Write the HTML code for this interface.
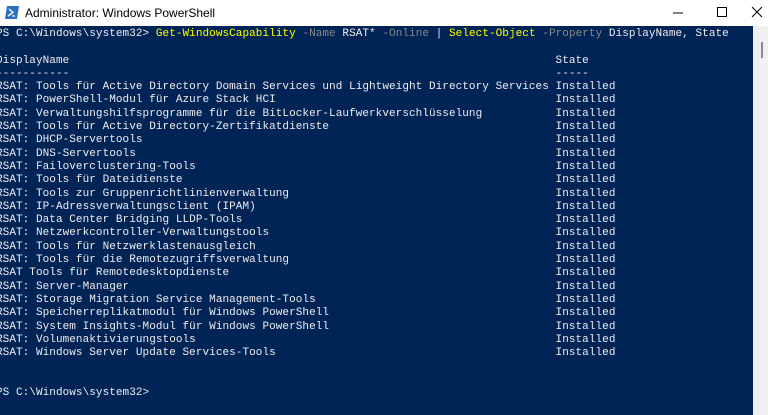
<!DOCTYPE html>
<html><head><style>
html,body{margin:0;padding:0;width:768px;height:415px;overflow:hidden;background:#fff}
.title{position:absolute;left:0;top:0;width:768px;height:26px;background:#fff;font-family:"Liberation Sans",sans-serif;font-size:12px;color:#000}
.title span{position:absolute;left:25px;top:6px}
.con{position:absolute;left:0;top:26px;width:753px;height:389px;background:#012456;overflow:hidden}
.sb{position:absolute;left:753px;top:26px;width:15px;height:389px;background:#f0f0f0}
.thumb{position:absolute;left:8px;top:16px;width:2px;height:16px;background:#8a8a8a}
pre{position:absolute;left:-4px;top:2px;margin:0;font-family:"Liberation Mono",monospace;font-size:11px;letter-spacing:0.06px;line-height:13.3px;color:#eeedf0;white-space:pre}
.y{color:#ffff00}.g{color:#8a8a8a}
</style></head><body>
<div class="title">
<svg style="position:absolute;left:5px;top:6px" width="14" height="13" viewBox="0 0 14 13"><path d="M2 0H14L12 13H0Z" fill="#2b6fc4"/><path d="M4 3L8 6.5L3 10" stroke="#fff" stroke-width="1.4" fill="none"/><path d="M7 10H10" stroke="#fff" stroke-width="1.2"/></svg>
<span>Administrator: Windows PowerShell</span>
<svg style="position:absolute;left:673px;top:6px" width="90" height="14"><path d="M0 7H10" stroke="#000"/><path d="M44.5 1.5h9v9h-9z" stroke="#000" fill="none"/><path d="M79 1L89 11M89 1L79 11" stroke="#000"/></svg>
</div>
<div class="con"><pre>PS C:\Windows\system32&gt; <span class="y">Get-WindowsCapability</span> <span class="g">-Name</span> RSAT* <span class="g">-Online</span> | <span class="y">Select-Object</span> <span class="g">-Property</span> DisplayName, State

DisplayName                                                                         State
-----------                                                                         -----
RSAT: Tools für Active Directory Domain Services und Lightweight Directory Services Installed
RSAT: PowerShell-Modul für Azure Stack HCI                                          Installed
RSAT: Verwaltungshilfsprogramme für die BitLocker-Laufwerkverschlüsselung           Installed
RSAT: Tools für Active Directory-Zertifikatdienste                                  Installed
RSAT: DHCP-Servertools                                                              Installed
RSAT: DNS-Servertools                                                               Installed
RSAT: Failoverclustering-Tools                                                      Installed
RSAT: Tools für Dateidienste                                                        Installed
RSAT: Tools zur Gruppenrichtlinienverwaltung                                        Installed
RSAT: IP-Adressverwaltungsclient (IPAM)                                             Installed
RSAT: Data Center Bridging LLDP-Tools                                               Installed
RSAT: Netzwerkcontroller-Verwaltungstools                                           Installed
RSAT: Tools für Netzwerklastenausgleich                                             Installed
RSAT: Tools für die Remotezugriffsverwaltung                                        Installed
RSAT Tools für Remotedesktopdienste                                                 Installed
RSAT: Server-Manager                                                                Installed
RSAT: Storage Migration Service Management-Tools                                    Installed
RSAT: Speicherreplikatmodul für Windows PowerShell                                  Installed
RSAT: System Insights-Modul für Windows PowerShell                                  Installed
RSAT: Volumenaktivierungstools                                                      Installed
RSAT: Windows Server Update Services-Tools                                          Installed


PS C:\Windows\system32&gt;</pre></div>
<div class="sb"><div class="thumb"></div></div>
</body></html>
